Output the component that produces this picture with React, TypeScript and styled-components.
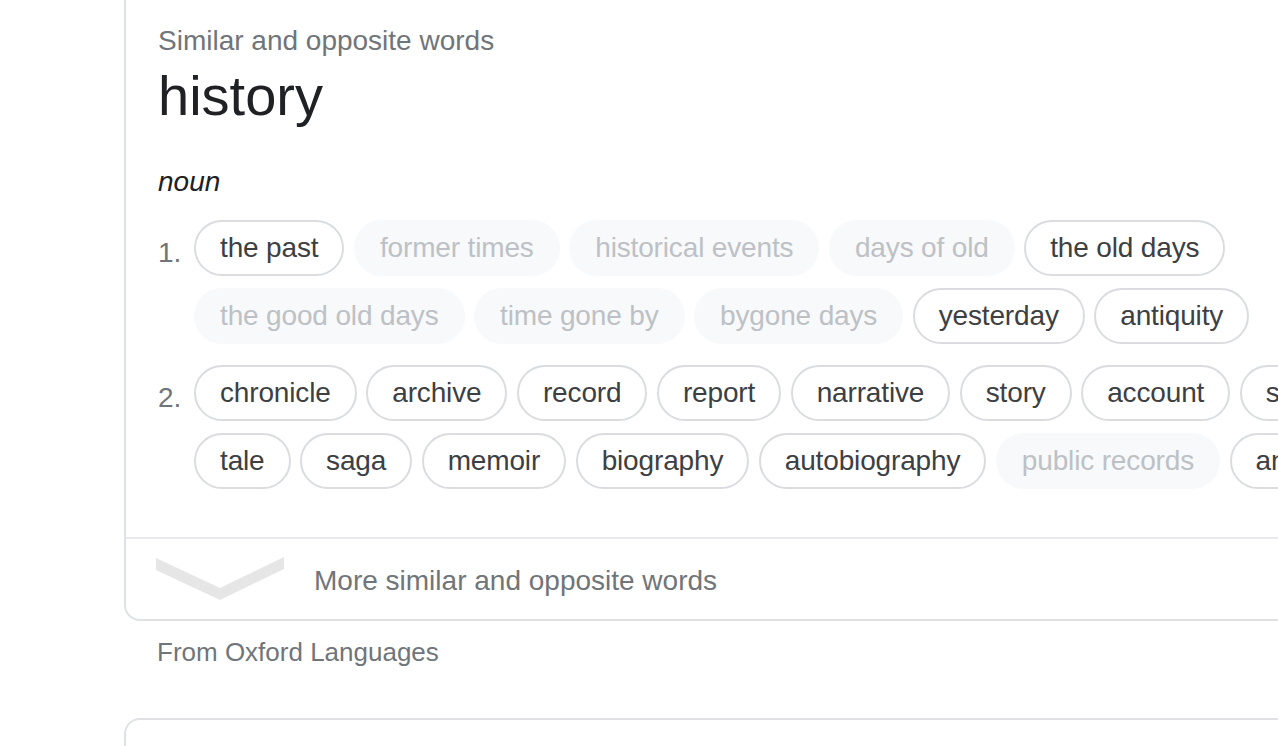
import React from 'react';
import styled, { createGlobalStyle } from 'styled-components';

const GlobalStyle = createGlobalStyle`
    html, body {
        margin: 0;
        padding: 0;
        background: #ffffff;
        overflow: hidden;
    }
    body {
        font-family: 'Liberation Sans', Arial, sans-serif;
    }
`;

const Page = styled.div`
    padding-left: 124px;
    width: 1500px;
`;

const Card = styled.div`
    box-sizing: border-box;
    width: 1368px;
    border: 2px solid #dfe1e5;
    border-top: none;
    border-radius: 0 0 16px 16px;
`;

const Content = styled.div`
    padding: 21px 32px 48px 32px;
`;

const Label = styled.div`
    font-size: 28px;
    line-height: 40px;
    color: #70757a;
`;

const Title = styled.div`
    margin-top: 3px;
    font-size: 56px;
    line-height: 64px;
    color: #202124;
`;

const PartOfSpeech = styled.div`
    margin-top: 36px;
    font-size: 28px;
    line-height: 36px;
    font-style: italic;
    color: #202124;
`;

const Sense = styled.div<{ $first?: boolean }>`
    display: flex;
    align-items: flex-start;
    margin-top: ${(p) => (p.$first ? '20px' : '21px')};
`;

const Num = styled.div`
    flex: 0 0 36px;
    font-size: 28px;
    line-height: 56px;
    padding-top: 5px;
    color: #70757a;
`;

const ChipWrap = styled.div`
    flex: 1;
    display: flex;
    flex-wrap: wrap;
    column-gap: 9.5px;
    row-gap: 12px;
`;

const Chip = styled.div<{ $muted?: boolean }>`
    box-sizing: border-box;
    height: 56px;
    padding: 0 24px;
    border: 2px solid ${(p) => (p.$muted ? '#f8f9fa' : '#dadce0')};
    border-radius: 28px;
    background: ${(p) => (p.$muted ? '#f8f9fa' : '#ffffff')};
    color: ${(p) => (p.$muted ? '#bdc1c6' : '#3c4043')};
    font-size: 28px;
    line-height: 52px;
    letter-spacing: -0.15px;
    white-space: nowrap;
`;

const Footer = styled.div`
    display: flex;
    align-items: center;
    gap: 30px;
    height: 80px;
    padding-left: 30px;
    border-top: 2px solid #e8eaed;
`;

const MoreText = styled.div`
    font-size: 28px;
    line-height: 36px;
    color: #70757a;
    padding-top: 4px;
`;

const Source = styled.div`
    padding: 15px 0 0 33px;
    font-size: 26px;
    line-height: 32px;
    color: #70757a;
`;

const NextCard = styled.div`
    box-sizing: border-box;
    width: 1368px;
    height: 120px;
    margin-top: 50px;
    border: 2px solid #dfe1e5;
    border-radius: 16px 16px 0 0;
`;

type Word = [string, boolean?];

const senses: Word[][] = [
    [
        ['the past'],
        ['former times', true],
        ['historical events', true],
        ['days of old', true],
        ['the old days'],
        ['the good old days', true],
        ['time gone by', true],
        ['bygone days', true],
        ['yesterday'],
        ['antiquity'],
    ],
    [
        ['chronicle'],
        ['archive'],
        ['record'],
        ['report'],
        ['narrative'],
        ['story'],
        ['account'],
        ['statement'],
        ['tale'],
        ['saga'],
        ['memoir'],
        ['biography'],
        ['autobiography'],
        ['public records', true],
        ['annals'],
    ],
];

const Chevron = () => (
    <svg width="128" height="44" viewBox="0 0 128 44">
        <polygon points="0,1 64,31 128,0 128,12 64,43 0,13" fill="#e6e6e6" />
    </svg>
);

const App = () => {
    return (
        <Page>
            <GlobalStyle />
            <Card>
                <Content>
                    <Label>Similar and opposite words</Label>
                    <Title>history</Title>
                    <PartOfSpeech>noun</PartOfSpeech>
                    {senses.map((words, i) => (
                        <Sense key={i} $first={i === 0}>
                            <Num>{i + 1}.</Num>
                            <ChipWrap>
                                {words.map(([w, muted]) => (
                                    <Chip key={w} $muted={muted}>
                                        {w}
                                    </Chip>
                                ))}
                            </ChipWrap>
                        </Sense>
                    ))}
                </Content>
                <Footer>
                    <Chevron />
                    <MoreText>More similar and opposite words</MoreText>
                </Footer>
            </Card>
            <Source>From Oxford Languages</Source>
            <NextCard />
        </Page>
    );
};

export default App;
